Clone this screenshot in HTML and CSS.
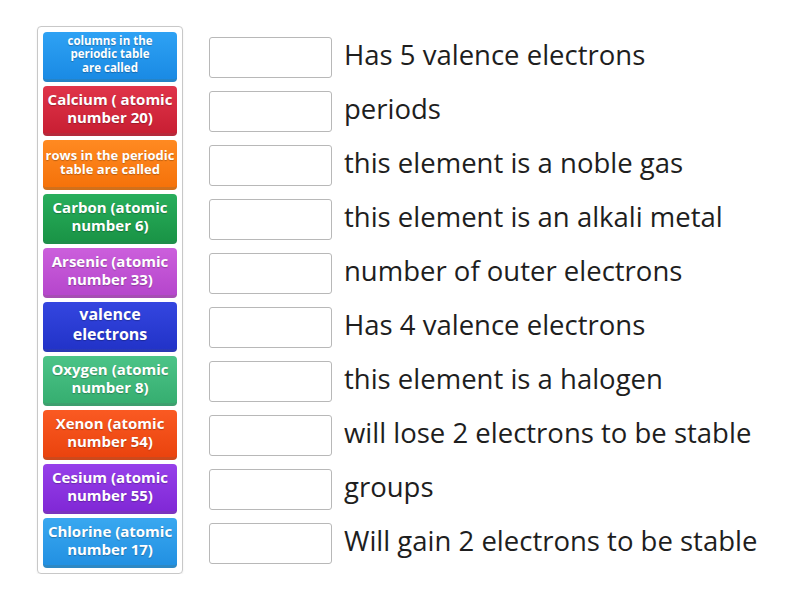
FILE: index.html
```html
<!DOCTYPE html>
<html>
<head>
<meta charset="utf-8">
<link rel="stylesheet" href="styles.css">
</head>
<body>
<div class="page">
  <div class="panel">
    <div class="tile c1 tiny">columns in the<br>periodic table<br>are called</div>
    <div class="tile c2">Calcium ( atomic number 20)</div>
    <div class="tile c3 small">rows in the periodic table are called</div>
    <div class="tile c4">Carbon (atomic number 6)</div>
    <div class="tile c5">Arsenic (atomic number 33)</div>
    <div class="tile c6 big">valence electrons</div>
    <div class="tile c7">Oxygen (atomic number 8)</div>
    <div class="tile c8">Xenon (atomic number 54)</div>
    <div class="tile c9">Cesium (atomic number 55)</div>
    <div class="tile c10">Chlorine (atomic number 17)</div>
  </div>
  <div class="rows">
    <div class="row"><div class="box"></div><div class="label">Has 5 valence electrons</div></div>
    <div class="row"><div class="box"></div><div class="label">periods</div></div>
    <div class="row"><div class="box"></div><div class="label">this element is a noble gas</div></div>
    <div class="row"><div class="box"></div><div class="label">this element is an alkali metal</div></div>
    <div class="row"><div class="box"></div><div class="label">number of outer electrons</div></div>
    <div class="row"><div class="box"></div><div class="label">Has 4 valence electrons</div></div>
    <div class="row"><div class="box"></div><div class="label">this element is a halogen</div></div>
    <div class="row"><div class="box"></div><div class="label">will lose 2 electrons to be stable</div></div>
    <div class="row"><div class="box"></div><div class="label">groups</div></div>
    <div class="row"><div class="box"></div><div class="label">Will gain 2 electrons to be stable</div></div>
  </div>
</div>
</body>
</html>
```

FILE: styles.css
```css
html, body {
  margin: 0;
  padding: 0;
  background: #ffffff;
  font-family: "Open Sans", "Noto Sans", sans-serif;
}

.page {
  display: flex;
  align-items: flex-start;
  padding: 26px 0 0 37px;
}

.panel {
  width: 134px;
  padding: 5px;
  border: 1px solid #c8c8c8;
  border-radius: 4px;
  display: flex;
  flex-direction: column;
  gap: 4px;
  box-shadow: 0 1px 2px rgba(0,0,0,0.08);
}

.tile {
  height: 50px;
  box-sizing: border-box;
  border-radius: 4px;
  display: flex;
  align-items: center;
  justify-content: center;
  text-align: center;
  color: #ffffff;
  font-weight: 700;
  font-size: 15px;
  line-height: 18px;
  padding: 0 3px 3px;
  border-bottom: 3px solid rgba(0,0,0,0.18);
  text-shadow: 0 1px 1px rgba(0,0,0,0.25);
}

.tile.big {
  font-size: 16px;
  line-height: 20px;
}

.tile.small {
  font-size: 13px;
  line-height: 14.5px;
  padding: 0 2px 3px;
}

.tile.tiny {
  font-size: 11.5px;
  line-height: 13.5px;
  padding: 0 2px 3px;
}

.c1 { background: linear-gradient(#2ea2f4, #1a8ae4); }
.c2 { background: linear-gradient(#e0344a, #c81f33); }
.c3 { background: linear-gradient(#ff8a22, #f5720a); }
.c4 { background: linear-gradient(#28ae5c, #1a9446); }
.c5 { background: linear-gradient(#cc5fdc, #b546cc); }
.c6 { background: linear-gradient(#3446e0, #2233c8); }
.c7 { background: linear-gradient(#4cc488, #36ae70); }
.c8 { background: linear-gradient(#fa5a22, #ea430e); }
.c9 { background: linear-gradient(#9740ea, #8028d6); }
.c10 { background: linear-gradient(#39a8f0, #2290e2); }

.rows {
  margin-left: 26px;
  padding-top: 6px;
  display: flex;
  flex-direction: column;
  gap: 4px;
}

.row {
  height: 50px;
  display: flex;
  align-items: center;
}

.box {
  width: 121px;
  height: 39px;
  border: 1px solid #b8b8b8;
  border-radius: 3px;
  background: #ffffff;
  flex: none;
}

.label {
  margin-left: 12px;
  font-size: 27.5px;
  color: #1e1e1e;
  white-space: nowrap;
  padding-bottom: 6px;
}
```
